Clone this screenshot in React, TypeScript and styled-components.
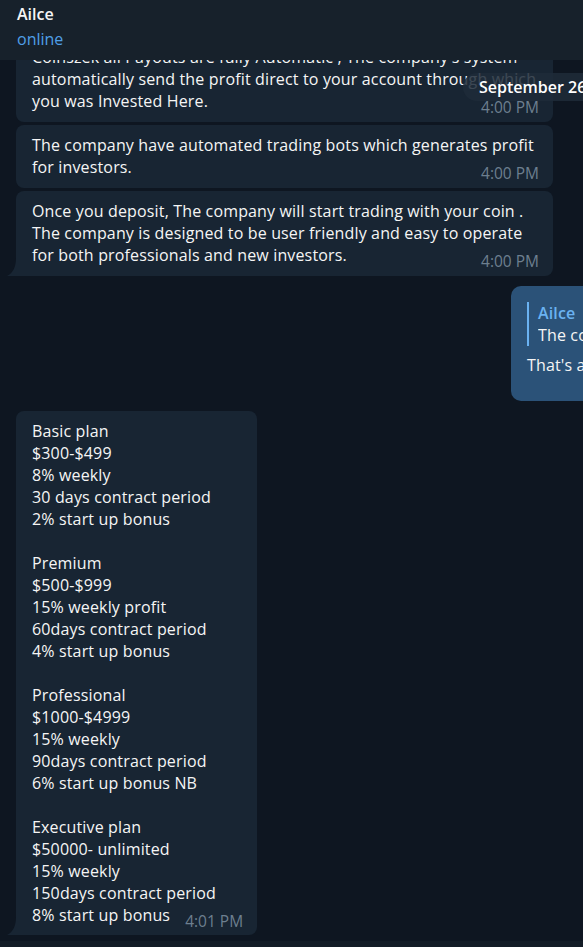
import React from "react";
import styled, { createGlobalStyle } from "styled-components";

const GlobalStyle = createGlobalStyle`
  html, body {
    margin: 0;
    padding: 0;
    background: #0e1621;
    overflow: hidden;
  }
  * {
    box-sizing: border-box;
  }
`;

type Msg = {
  text: string;
  time: string;
  tail?: boolean;
};

const topGroup: Msg[] = [
  {
    text: "Coinszek all Payouts are fully Automatic , The company's system automatically send the profit direct to your account through which you was Invested Here.",
    time: "4:00 PM",
  },
  {
    text: "The company have automated trading bots which generates profit for investors.",
    time: "4:00 PM",
  },
  {
    text: "Once you deposit, The company will start trading with your coin . The company is designed to be user friendly and easy to operate for both professionals and new investors.",
    time: "4:00 PM",
    tail: true,
  },
];

const plans = `Basic plan
$300-$499
8% weekly
30 days contract period
2% start up bonus

Premium
$500-$999
15% weekly profit
60days contract period
4% start up bonus

Professional
$1000-$4999
15% weekly
90days contract period
6% start up bonus NB

Executive plan
$50000- unlimited
15% weekly
150days contract period
8% start up bonus`;

const Tail = () => (
  <TailSvg width="9" height="18" viewBox="0 0 9 18">
    <path d="M9 0 C9 9 6 15 0 18 H9 Z" fill="#182533" />
  </TailSvg>
);

const App = () => {
  return (
    <Window>
      <GlobalStyle />
      <Header>
        <Name>Ailce</Name>
        <Status>online</Status>
      </Header>
      <Feed>
        <DatePill>September 26</DatePill>
        <Column>
          <Group>
            {topGroup.map((m, i) => (
              <Bubble key={i} $tail={m.tail}>
                {m.text}
                <Time>{m.time}</Time>
                {m.tail && <Tail />}
              </Bubble>
            ))}
          </Group>
          <OutBubble>
            <Reply>
              <ReplyName>Ailce</ReplyName>
              <ReplyText>
                The company have automated trading bots which generates profit
                for investors.
              </ReplyText>
            </Reply>
            <OutText>That's a good plan</OutText>
          </OutBubble>
          <PlanBubble $tail>
            {plans}
            <Time>4:01 PM</Time>
            <Tail />
          </PlanBubble>
        </Column>
      </Feed>
      <Footer />
    </Window>
  );
};

export default App;

const Window = styled.div`
  width: 583px;
  height: 947px;
  display: flex;
  flex-direction: column;
  background: #0e1621;
  font-family: "Open Sans", "Noto Sans", sans-serif;
  overflow: hidden;
`;

const Header = styled.div`
  height: 60px;
  flex-shrink: 0;
  padding: 3px 17px 0;
  background: #17212b;
  display: flex;
  flex-direction: column;
  gap: 3px;
  position: relative;
  z-index: 2;
`;

const Name = styled.div`
  font-size: 16px;
  line-height: 22px;
  font-weight: 600;
  color: #f5f5f5;
`;

const Status = styled.div`
  font-size: 16px;
  line-height: 22px;
  color: #4f9fe6;
`;

const Feed = styled.div`
  flex: 1;
  position: relative;
  overflow: hidden;
  display: flex;
  flex-direction: column;
  justify-content: flex-end;
  padding-bottom: 6px;
`;

const Column = styled.div`
  width: 900px;
  display: flex;
  flex-direction: column;
  gap: 10px;
  padding: 0 16px;
`;

const Group = styled.div`
  display: flex;
  flex-direction: column;
  gap: 3px;
`;

const DatePill = styled.div`
  position: absolute;
  top: 13px;
  left: 463px;
  z-index: 1;
  padding: 3px 16px;
  border-radius: 14px;
  background: rgba(30, 43, 57, 0.86);
  color: #ffffff;
  font-size: 16px;
  line-height: 22px;
  font-weight: 600;
  white-space: nowrap;
`;

const Bubble = styled.div<{ $tail?: boolean }>`
  position: relative;
  width: 537px;
  padding: 9px 14px 10px 16px;
  background: #182533;
  border-radius: 8px;
  border-bottom-left-radius: ${(p) => (p.$tail ? "0" : "8px")};
  color: #f5f5f5;
  font-size: 16px;
  letter-spacing: 0.15px;
  line-height: 22px;
`;

const PlanBubble = styled(Bubble)`
  width: fit-content;
  white-space: pre-line;
  padding-bottom: 9px;
`;

const Time = styled.span`
  float: right;
  position: relative;
  top: 6px;
  margin-left: 15px;
  font-size: 15.5px;
  letter-spacing: 0;
  line-height: 22px;
  color: #6d7f8f;
  white-space: nowrap;
`;

const TailSvg = styled.svg`
  position: absolute;
  left: -9px;
  bottom: 0;
  display: block;
`;

const OutBubble = styled.div`
  align-self: flex-end;
  width: 373px;
  padding: 16px 16px 25px;
  background: #2b5278;
  border-radius: 10px;
  color: #f5f5f5;
  font-size: 16px;
  letter-spacing: 0.15px;
  line-height: 22px;
`;

const Reply = styled.div`
  border-left: 2px solid #6ab2f2;
  padding-left: 9px;
  margin-bottom: 8px;
`;

const ReplyName = styled.div`
  color: #6ab2f2;
  font-weight: 600;
`;

const ReplyText = styled.div`
  white-space: nowrap;
  overflow: hidden;
  text-overflow: ellipsis;
`;

const OutText = styled.div``;

const Footer = styled.div`
  height: 6px;
  flex-shrink: 0;
  background: #131c26;
`;
